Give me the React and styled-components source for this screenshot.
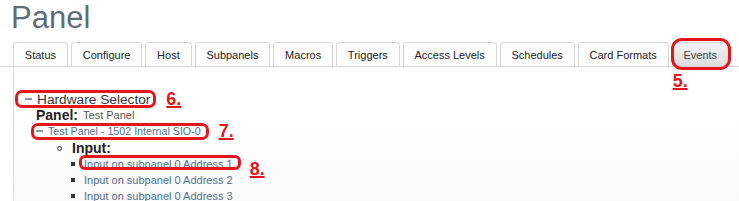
import React from 'react';
import styled, { createGlobalStyle } from 'styled-components';

const GlobalStyle = createGlobalStyle`
body {
    margin: 0;
    background: #fff;
    font-family: "Liberation Sans", Arial, sans-serif;
}
`

const Page = styled.div`
width: 739px;
height: 201px;
overflow: hidden;
`
const Title = styled.h1`
margin: 0;
padding-left: 11px;
height: 42px;
line-height: 36px;
font-size: 31px;
font-weight: normal;
color: #5f6b77;
`
const TabBar = styled.div`
display: flex;
align-items: flex-end;
height: 24px;
padding-left: 13px;
border-bottom: 1px solid #d6d6d6;
`
const Tab = styled.div`
position: relative;
box-sizing: border-box;
height: 24px;
margin-right: 3px;
padding: 0 10.85px;
display: flex;
align-items: center;
font-size: 11px;
color: ${p => p.$active ? '#454545' : '#222'};
background: ${p => p.$active ? 'linear-gradient(#f2f2f2, #dcdcdc)' : '#fff'};
border: 1px solid #d6d6d6;
border-bottom: none;
border-radius: 4px 4px 0 0;
`
const TabMark = styled.span`
position: absolute;
top: -5px;
right: -3px;
bottom: -4px;
left: -2px;
border: 3px solid #e3161d;
border-radius: 11px;
pointer-events: none;
`
const Note = styled.span`
font-size: 18px;
line-height: 18px;
font-weight: bold;
color: #e3161d;
text-decoration: underline;
text-decoration-thickness: 2px;
text-underline-offset: 1px;
margin-left: ${p => p.$gap || 0}px;
transform: translateY(${p => p.$dy || 0}px);
`
const TabNote = styled(Note)`
position: absolute;
top: calc(100% + 6px);
left: 0;
`
const Content = styled.div`
margin-left: 13px;
padding-top: 23px;
height: 200px;
border-left: 1px solid #dcdcdc;
background: linear-gradient(#fff 0, #fff 50px, #f9f9f9 130px);
`
const Row = styled.div`
display: flex;
align-items: center;
height: ${p => p.$h}px;
padding-left: ${p => p.$indent}px;
`
const Mark = styled.span`
position: relative;
align-self: stretch;
display: inline-flex;
align-items: center;
&::after {
    content: '';
    position: absolute;
    top: ${p => p.$t}px;
    right: ${p => p.$r}px;
    bottom: ${p => p.$b}px;
    left: ${p => p.$l}px;
    border: 3px solid #e3161d;
    border-radius: ${p => p.$radius || 7}px;
}
`
const Toggle = styled.span`
display: inline-block;
width: 7px;
height: 2px;
margin-right: ${p => p.$gap}px;
background: #8497ab;
`
const Heading = styled.span`
font-size: 13.7px;
color: #333;
`
const Label = styled.span`
font-size: 14px;
font-weight: bold;
color: #222;
`
const Value = styled.span`
font-size: 11px;
color: #555;
margin-left: 5px;
`
const Link = styled.a`
font-size: ${p => p.$size || 11}px;
color: #52718f;
text-decoration: none;
`
const Circle = styled.span`
box-sizing: border-box;
width: 5px;
height: 5px;
margin-right: 10px;
border: 1px solid #444;
border-radius: 50%;
`
const Square = styled.span`
width: 4px;
height: 4px;
margin-right: 9px;
background: #333;
`

const tabs = ['Status', 'Configure', 'Host', 'Subpanels', 'Macros', 'Triggers', 'Access Levels', 'Schedules', 'Card Formats']
const inputs = [1, 2, 3]

const App = () => {
    return (
        <Page>
            <GlobalStyle />
            <Title>Panel</Title>
            <TabBar>
                {tabs.map(t => <Tab key={t}>{t}</Tab>)}
                <Tab $active>
                    Events
                    <TabMark />
                    <TabNote>5.</TabNote>
                </Tab>
            </TabBar>
            <Content>
                <Row $h={18} $indent={11}>
                    <Mark $t={0} $r={-6} $b={0} $l={-10}>
                        <Toggle $gap={5} />
                        <Heading>Hardware Selector</Heading>
                    </Mark>
                    <Note $gap={16}>6.</Note>
                </Row>
                <Row $h={14} $indent={22}>
                    <Label>Panel:</Label>
                    <Value>Test Panel</Value>
                </Row>
                <Row $h={18} $indent={22}>
                    <Mark $t={1} $r={-8} $b={0} $l={-5}>
                        <Toggle $gap={5} />
                        <Link href="#" $size={10.7}>Test Panel - 1502 Internal SIO-0</Link>
                    </Mark>
                    <Note $gap={18}>7.</Note>
                </Row>
                <Row $h={16} $indent={43}>
                    <Circle />
                    <Label>Input:</Label>
                </Row>
                {inputs.map(n => (
                    <Row key={n} $h={16} $indent={57}>
                        <Square />
                        {n === 1 ? (
                            <>
                                <Mark $t={-1} $r={-8} $b={2} $l={-5} $radius={6}>
                                    <Link href="#">Input on subpanel 0 Address {n}</Link>
                                </Mark>
                                <Note $gap={17} $dy={5}>8.</Note>
                            </>
                        ) : (
                            <Link href="#">Input on subpanel 0 Address {n}</Link>
                        )}
                    </Row>
                ))}
            </Content>
        </Page>
    )
}

export default App
